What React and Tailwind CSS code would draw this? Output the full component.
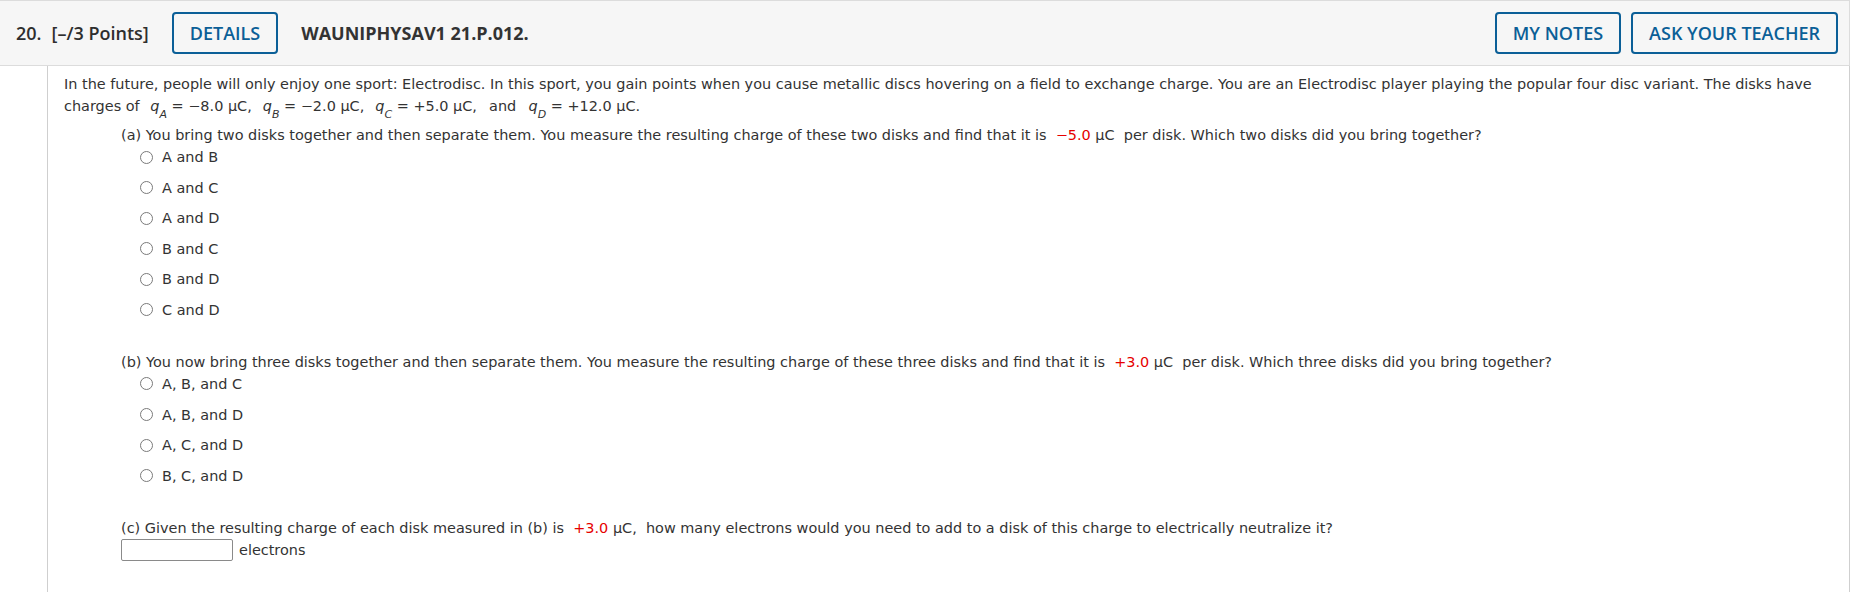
import React from "react";

const partA = ["A and B", "A and C", "A and D", "B and C", "B and D", "C and D"];
const partB = ["A, B, and C", "A, B, and D", "A, C, and D", "B, C, and D"];

const Q = ({ sub }) => (
  <span className="italic">
    q<sub className="text-[11px] italic align-[-4px] leading-none">{sub}</sub>
  </span>
);

const HeaderButton = ({ children }) => (
  <button className="h-[42px] px-[16px] border-2 border-[#0b5f97] rounded-[4px] text-[#0b5f97] text-[18px] font-semibold leading-none bg-transparent">
    {children}
  </button>
);

const Radio = ({ label }) => (
  <label className="flex items-center h-[22px]">
    <span className="w-[13px] h-[13px] rounded-full border border-[#7a7a7a] bg-white shrink-0 mr-[9px]" />
    <span>{label}</span>
  </label>
);

export default function App() {
  return (
    <div className="w-[1850px] bg-white text-[#333]">
      {/* question header */}
      <div className="h-[66px] flex items-center pl-[16px] pr-[11px] bg-[#f6f6f6] border-t border-b border-r border-[#dcdcdc] text-[18px] font-semibold font-['Open_Sans','Noto_Sans',sans-serif]">
        <span className="text-[#2e2e2e] mr-[10px]">20.</span>
        <span className="text-[#2e2e2e]">[–/3 Points]</span>
        <div className="ml-[23px]">
          <HeaderButton>DETAILS</HeaderButton>
        </div>
        <span className="ml-[23px] font-bold text-[#333]">WAUNIPHYSAV1 21.P.012.</span>
        <div className="ml-auto flex gap-[10px]">
          <HeaderButton>MY NOTES</HeaderButton>
          <HeaderButton>ASK YOUR TEACHER</HeaderButton>
        </div>
      </div>

      {/* question body */}
      <div className="ml-[47px] h-[526px] border-l border-r border-[#cfcfcf] pl-[16px] pt-[7px] text-[14.45px] leading-[22px] font-['DejaVu_Sans',Verdana,sans-serif]">
        <p>
          In the future, people will only enjoy one sport: Electrodisc. In this sport, you gain points when you cause
          metallic discs hovering on a field to exchange charge. You are an Electrodisc player playing the popular four
          disc variant. The disks have charges of <span className="ml-[6px]"><Q sub="A" /></span> = −8.0 μC,
          <span className="ml-[11px]"><Q sub="B" /></span> = −2.0 μC,
          <span className="ml-[11px]"><Q sub="C" /></span> = +5.0 μC,&nbsp; <span className="ml-[3px]">and</span>&nbsp;{" "}
          <span className="ml-[3px]"><Q sub="D" /></span> = +12.0 μC.
        </p>

        <div className="pl-[57px] mt-[7px]">
          <p>
            (a) You bring two disks together and then separate them. You measure the resulting charge of these two disks
            and find that it is&nbsp; <span className="text-[#e60000]">−5.0</span> μC&nbsp; per disk. Which two disks did
            you bring together?
          </p>
          <div className="pl-[19px] flex flex-col gap-[8.6px]">
            {partA.map((o) => (
              <Radio key={o} label={o} />
            ))}
          </div>

          <p className="mt-[30px]">
            (b) You now bring three disks together and then separate them. You measure the resulting charge of these three
            disks and find that it is&nbsp; <span className="text-[#e60000]">+3.0</span> μC&nbsp; per disk. Which three
            disks did you bring together?
          </p>
          <div className="pl-[19px] flex flex-col gap-[8.6px]">
            {partB.map((o) => (
              <Radio key={o} label={o} />
            ))}
          </div>

          <p className="mt-[30px]">
            (c) Given the resulting charge of each disk measured in (b) is&nbsp; <span className="text-[#e60000]">+3.0</span>{" "}
            μC,&nbsp; how many electrons would you need to add to a disk of this charge to electrically neutralize it?
          </p>
          <div className="flex items-center">
            <input
              type="text"
              className="w-[112px] h-[22px] border border-[#8a8a8a] rounded-[2px] bg-white"
            />
            <span className="ml-[6px]">electrons</span>
          </div>
        </div>
      </div>
    </div>
  );
}
